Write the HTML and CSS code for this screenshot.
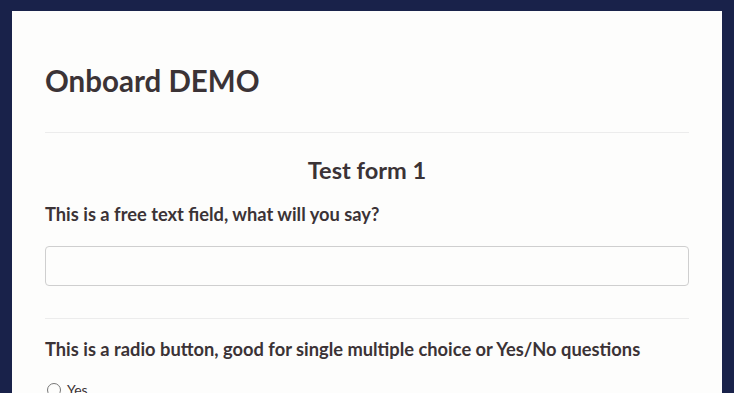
FILE: index.html
```html
<!DOCTYPE html>
<html>
<head>
<meta charset="utf-8">
<link rel="stylesheet" href="styles.css">
</head>
<body>
<div class="card">
  <h1 class="title">Onboard DEMO</h1>
  <hr class="rule">
  <h2 class="form-title">Test form 1</h2>
  <div class="field">
    <label class="label">This is a free text field, what will you say?</label>
    <input class="text-input" type="text">
  </div>
  <hr class="rule rule-2">
  <div class="field">
    <label class="label label-2">This is a radio button, good for single multiple choice or Yes/No questions</label>
    <label class="option"><span class="radio"></span><span class="option-text">Yes</span></label>
  </div>
</div>
</body>
</html>
```
FILE: styles.css
```css
html, body { margin: 0; padding: 0; }
body {
  background: #19224a;
  font-family: Lato, "Noto Sans", sans-serif;
  color: #3b3336;
  height: 393px;
  overflow: hidden;
}
.card {
  background: #fdfdfc;
  margin: 11px 12px 0 12px;
  padding: 52px 33px 0 33px;
  height: 382px;
  box-sizing: border-box;
  overflow: hidden;
}
.title {
  margin: 0;
  font-size: 29.5px;
  line-height: 36px;
  font-weight: 700;
}
.rule {
  border: 0;
  border-top: 1px solid #ececec;
  margin: 33px 0 0 0;
}
.form-title {
  margin: 22px 0 0 0;
  text-align: center;
  font-size: 23.6px;
  line-height: 30px;
  font-weight: 700;
}
.field { display: flex; flex-direction: column; }
.label {
  margin-top: 17px;
  font-size: 18.3px;
  line-height: 24px;
  font-weight: 700;
}
.label-2 { margin-top: 18px; }
.text-input {
  margin: 20px 0 0 0;
  height: 40px;
  box-sizing: border-box;
  border: 1px solid #cfcfcf;
  border-radius: 4px;
  background: #fdfdfc;
}
.rule-2 { margin-top: 32px; }
.option {
  margin-top: 19px;
  display: flex;
  align-items: center;
  gap: 6px;
  font-size: 14px;
  line-height: 20px;
}
.radio {
  width: 12px; height: 12px;
  border: 1px solid #777;
  border-radius: 50%;
  margin-left: 2px;
}
```
